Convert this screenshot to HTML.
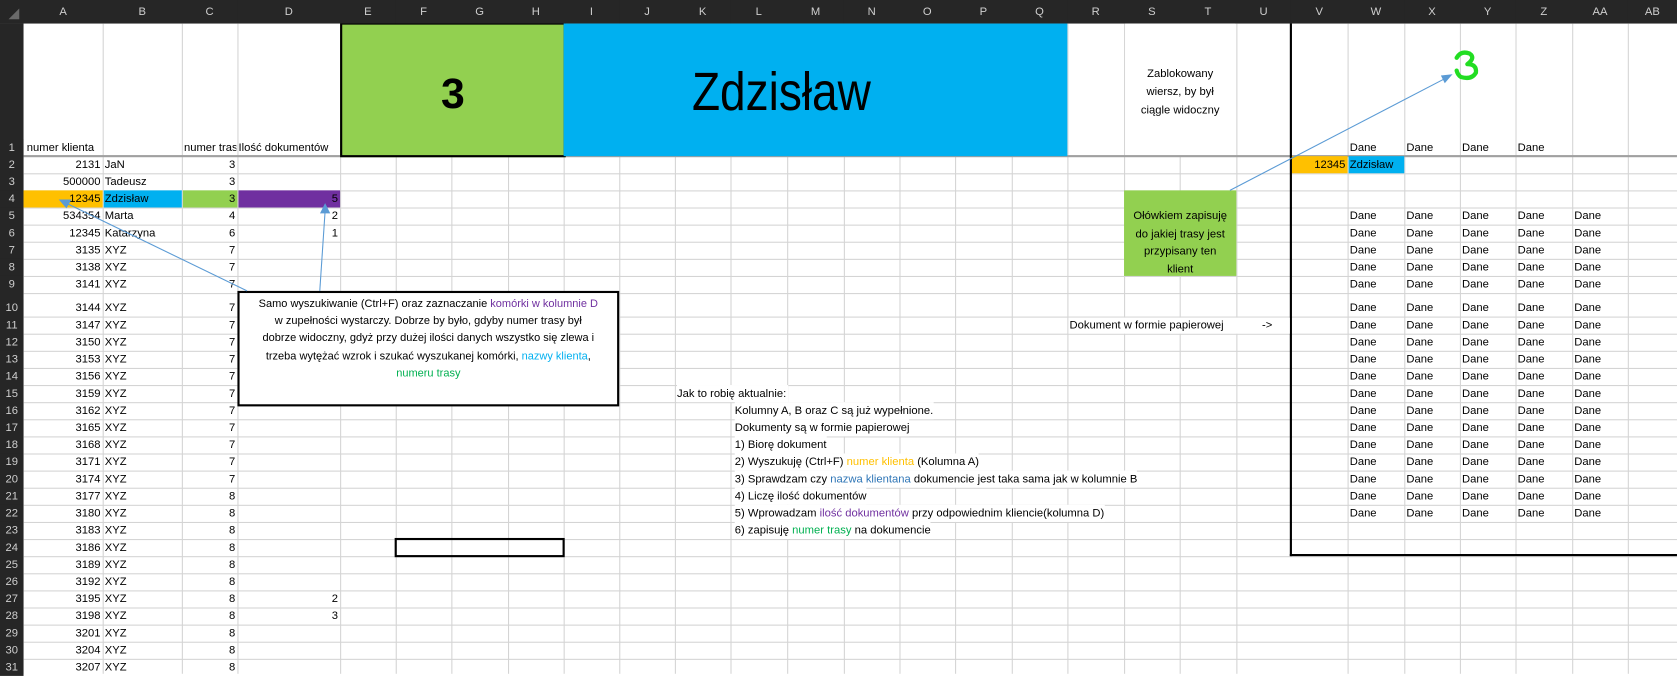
<!DOCTYPE html>
<html><head><meta charset="utf-8"><style>
html,body{margin:0;padding:0;background:#fff;overflow:hidden;width:1677px;height:673px}
#w{position:absolute;left:0;top:0;width:1568px;height:630px;transform:scale(1.0695);transform-origin:0 0;font-family:"Liberation Sans",Arial,sans-serif;font-size:10.5px;color:#000}
.a{position:absolute}
.hd{position:absolute;top:0;height:22px;background:#262626;color:#cfcfcf;font-size:10.5px;line-height:22px;text-align:center}
.rh{position:absolute;left:0;width:22px;background:#262626;color:#cfcfcf;font-size:10.5px;text-align:center}
.v{position:absolute;top:22px;width:1px;height:608px;background:#d4d4d4}
.h{position:absolute;left:22px;width:1546px;height:1px;background:#d4d4d4}
.c{position:absolute;height:16px;line-height:17px;white-space:nowrap}
.r{text-align:right}
</style></head><body><div id="w">
<div class="hd" style="left:0;width:1568px"></div>
<div class="a" style="left:8px;top:8px;width:0;height:0;border-left:10px solid transparent;border-bottom:10px solid #6a6a6a"></div>
<div class="hd" style="left:22px;width:74px">A</div><div class="hd" style="left:96px;width:74px">B</div><div class="hd" style="left:170px;width:52px">C</div><div class="hd" style="left:222px;width:96px">D</div>
<div class="hd" style="left:318px;width:52px">E</div><div class="hd" style="left:370px;width:52px">F</div><div class="hd" style="left:422px;width:53px">G</div><div class="hd" style="left:475px;width:52px">H</div><div class="hd" style="left:527px;width:52px">I</div><div class="hd" style="left:579px;width:52px">J</div><div class="hd" style="left:631px;width:52px">K</div><div class="hd" style="left:683px;width:53px">L</div><div class="hd" style="left:736px;width:53px">M</div><div class="hd" style="left:789px;width:52px">N</div><div class="hd" style="left:841px;width:52px">O</div><div class="hd" style="left:893px;width:53px">P</div><div class="hd" style="left:946px;width:52px">Q</div><div class="hd" style="left:998px;width:53px">R</div><div class="hd" style="left:1051px;width:52px">S</div><div class="hd" style="left:1103px;width:53px">T</div><div class="hd" style="left:1156px;width:51px">U</div><div class="hd" style="left:1207px;width:53px">V</div><div class="hd" style="left:1260px;width:53px">W</div><div class="hd" style="left:1313px;width:52px">X</div><div class="hd" style="left:1365px;width:52px">Y</div><div class="hd" style="left:1417px;width:53px">Z</div><div class="hd" style="left:1470px;width:52px">AA</div><div class="hd" style="left:1522px;width:46px">AB</div>
<div class="rh" style="top:22px;height:608px"></div>
<div class="rh" style="top:130px;height:16px;line-height:16px">1</div>
<div class="rh" style="top:146px;line-height:16px">2</div><div class="rh" style="top:162px;line-height:16px">3</div><div class="rh" style="top:178px;line-height:16px">4</div><div class="rh" style="top:194px;line-height:16px">5</div><div class="rh" style="top:210px;line-height:16px">6</div><div class="rh" style="top:226px;line-height:16px">7</div><div class="rh" style="top:242px;line-height:16px">8</div><div class="rh" style="top:258px;line-height:16px">9</div><div class="rh" style="top:280px;line-height:16px">10</div>
<div class="rh" style="top:296px;line-height:16px">11</div><div class="rh" style="top:312px;line-height:16px">12</div><div class="rh" style="top:328px;line-height:16px">13</div><div class="rh" style="top:344px;line-height:16px">14</div><div class="rh" style="top:360px;line-height:16px">15</div><div class="rh" style="top:376px;line-height:16px">16</div><div class="rh" style="top:392px;line-height:16px">17</div><div class="rh" style="top:408px;line-height:16px">18</div><div class="rh" style="top:424px;line-height:16px">19</div><div class="rh" style="top:440px;line-height:16px">20</div><div class="rh" style="top:456px;line-height:16px">21</div><div class="rh" style="top:472px;line-height:16px">22</div><div class="rh" style="top:488px;line-height:16px">23</div><div class="rh" style="top:504px;line-height:16px">24</div><div class="rh" style="top:520px;line-height:16px">25</div><div class="rh" style="top:536px;line-height:16px">26</div><div class="rh" style="top:552px;line-height:16px">27</div><div class="rh" style="top:568px;line-height:16px">28</div><div class="rh" style="top:584px;line-height:16px">29</div><div class="rh" style="top:600px;line-height:16px">30</div><div class="rh" style="top:616px;line-height:16px">31</div>
<div class="v" style="left:96px"></div><div class="v" style="left:170px"></div><div class="v" style="left:222px"></div><div class="v" style="left:318px"></div><div class="v" style="left:370px"></div><div class="v" style="left:422px"></div><div class="v" style="left:475px"></div><div class="v" style="left:527px"></div><div class="v" style="left:579px"></div><div class="v" style="left:631px"></div><div class="v" style="left:683px"></div><div class="v" style="left:736px"></div><div class="v" style="left:789px"></div><div class="v" style="left:841px"></div><div class="v" style="left:893px"></div><div class="v" style="left:946px"></div><div class="v" style="left:998px"></div><div class="v" style="left:1051px"></div><div class="v" style="left:1103px"></div><div class="v" style="left:1156px"></div><div class="v" style="left:1260px"></div><div class="v" style="left:1313px"></div><div class="v" style="left:1365px"></div><div class="v" style="left:1417px"></div><div class="v" style="left:1470px"></div><div class="v" style="left:1522px"></div>
<div class="h" style="top:162px"></div><div class="h" style="top:178px"></div><div class="h" style="top:194px"></div><div class="h" style="top:210px"></div><div class="h" style="top:226px"></div><div class="h" style="top:242px"></div><div class="h" style="top:258px"></div><div class="h" style="top:274px"></div><div class="h" style="top:296px"></div><div class="h" style="top:312px"></div><div class="h" style="top:328px"></div><div class="h" style="top:344px"></div><div class="h" style="top:360px"></div><div class="h" style="top:376px"></div><div class="h" style="top:392px"></div><div class="h" style="top:408px"></div><div class="h" style="top:424px"></div><div class="h" style="top:440px"></div><div class="h" style="top:456px"></div><div class="h" style="top:472px"></div><div class="h" style="top:488px"></div><div class="h" style="top:504px"></div><div class="h" style="top:520px"></div><div class="h" style="top:536px"></div><div class="h" style="top:552px"></div><div class="h" style="top:568px"></div><div class="h" style="top:584px"></div><div class="h" style="top:600px"></div><div class="h" style="top:616px"></div>
<div class="a" style="left:1052px;top:22px;width:103px;height:124px;background:#fff"></div>
<div class="a" style="left:1052px;top:61px;width:103px;text-align:center;line-height:17px;font-size:10.5px">Zablokowany<br>wiersz, by był<br>ciągle widoczny</div>
<div class="a" style="left:22px;top:145px;width:1546px;height:2px;background:#a0a0a0"></div>
<div class="a" style="left:318px;top:22px;width:207px;height:122px;background:#92d050;border:1px solid #000;border-width:1px 2px 2px 2px;text-align:center;line-height:130px;font-size:40px;font-weight:bold">3</div>
<div class="a" style="left:527px;top:22px;width:471px;height:124px;background:#00b0f0;overflow:hidden"><div class="a" style="left:120px;top:0;line-height:128px;font-size:50px;transform:scaleX(0.86);transform-origin:0 0;white-space:nowrap">Zdzisław</div></div>
<div class="c" style="left:25px;top:130px">numer klienta</div>
<div class="c" style="left:172px;top:130px;width:49px;overflow:hidden">numer trasy</div>
<div class="c" style="left:223px;top:130px;width:95px;overflow:hidden">Ilość dokumentów</div>
<div class="c" style="left:1262px;top:130px">Dane</div><div class="c" style="left:1315px;top:130px">Dane</div><div class="c" style="left:1367px;top:130px">Dane</div><div class="c" style="left:1419px;top:130px">Dane</div>
<div class="a" style="left:22px;top:178px;width:74px;height:16px;background:#ffc000"></div>
<div class="a" style="left:97px;top:178px;width:73px;height:16px;background:#00b0f0"></div>
<div class="a" style="left:171px;top:178px;width:51px;height:16px;background:#92d050"></div>
<div class="a" style="left:223px;top:178px;width:95px;height:16px;background:#7030a0"></div>
<div class="a" style="left:1207px;top:146px;width:53px;height:16px;background:#ffc000"></div>
<div class="a" style="left:1261px;top:146px;width:52px;height:16px;background:#00b0f0"></div>
<div class="c r" style="left:22px;width:72px;top:146px">2131</div><div class="c" style="left:98px;top:146px">JaN</div><div class="c r" style="left:170px;width:50px;top:146px">3</div>
<div class="c r" style="left:22px;width:72px;top:162px">500000</div><div class="c" style="left:98px;top:162px">Tadeusz</div><div class="c r" style="left:170px;width:50px;top:162px">3</div>
<div class="c r" style="left:22px;width:72px;top:178px">12345</div><div class="c" style="left:98px;top:178px">Zdzisław</div><div class="c r" style="left:170px;width:50px;top:178px">3</div><div class="c r" style="left:222px;width:94px;top:178px">5</div>
<div class="c r" style="left:22px;width:72px;top:194px">534354</div><div class="c" style="left:98px;top:194px">Marta</div><div class="c r" style="left:170px;width:50px;top:194px">4</div><div class="c r" style="left:222px;width:94px;top:194px">2</div>
<div class="c r" style="left:22px;width:72px;top:210px">12345</div><div class="c" style="left:98px;top:210px">Katarzyna</div><div class="c r" style="left:170px;width:50px;top:210px">6</div><div class="c r" style="left:222px;width:94px;top:210px">1</div>
<div class="c r" style="left:22px;width:72px;top:226px">3135</div><div class="c" style="left:98px;top:226px">XYZ</div><div class="c r" style="left:170px;width:50px;top:226px">7</div>
<div class="c r" style="left:22px;width:72px;top:242px">3138</div><div class="c" style="left:98px;top:242px">XYZ</div><div class="c r" style="left:170px;width:50px;top:242px">7</div>
<div class="c r" style="left:22px;width:72px;top:258px">3141</div><div class="c" style="left:98px;top:258px">XYZ</div><div class="c r" style="left:170px;width:50px;top:258px">7</div>
<div class="c r" style="left:22px;width:72px;top:280px">3144</div><div class="c" style="left:98px;top:280px">XYZ</div><div class="c r" style="left:170px;width:50px;top:280px">7</div>
<div class="c r" style="left:22px;width:72px;top:296px">3147</div><div class="c" style="left:98px;top:296px">XYZ</div><div class="c r" style="left:170px;width:50px;top:296px">7</div>
<div class="c r" style="left:22px;width:72px;top:312px">3150</div><div class="c" style="left:98px;top:312px">XYZ</div><div class="c r" style="left:170px;width:50px;top:312px">7</div>
<div class="c r" style="left:22px;width:72px;top:328px">3153</div><div class="c" style="left:98px;top:328px">XYZ</div><div class="c r" style="left:170px;width:50px;top:328px">7</div>
<div class="c r" style="left:22px;width:72px;top:344px">3156</div><div class="c" style="left:98px;top:344px">XYZ</div><div class="c r" style="left:170px;width:50px;top:344px">7</div>
<div class="c r" style="left:22px;width:72px;top:360px">3159</div><div class="c" style="left:98px;top:360px">XYZ</div><div class="c r" style="left:170px;width:50px;top:360px">7</div>
<div class="c r" style="left:22px;width:72px;top:376px">3162</div><div class="c" style="left:98px;top:376px">XYZ</div><div class="c r" style="left:170px;width:50px;top:376px">7</div>
<div class="c r" style="left:22px;width:72px;top:392px">3165</div><div class="c" style="left:98px;top:392px">XYZ</div><div class="c r" style="left:170px;width:50px;top:392px">7</div>
<div class="c r" style="left:22px;width:72px;top:408px">3168</div><div class="c" style="left:98px;top:408px">XYZ</div><div class="c r" style="left:170px;width:50px;top:408px">7</div>
<div class="c r" style="left:22px;width:72px;top:424px">3171</div><div class="c" style="left:98px;top:424px">XYZ</div><div class="c r" style="left:170px;width:50px;top:424px">7</div>
<div class="c r" style="left:22px;width:72px;top:440px">3174</div><div class="c" style="left:98px;top:440px">XYZ</div><div class="c r" style="left:170px;width:50px;top:440px">7</div>
<div class="c r" style="left:22px;width:72px;top:456px">3177</div><div class="c" style="left:98px;top:456px">XYZ</div><div class="c r" style="left:170px;width:50px;top:456px">8</div>
<div class="c r" style="left:22px;width:72px;top:472px">3180</div><div class="c" style="left:98px;top:472px">XYZ</div><div class="c r" style="left:170px;width:50px;top:472px">8</div>
<div class="c r" style="left:22px;width:72px;top:488px">3183</div><div class="c" style="left:98px;top:488px">XYZ</div><div class="c r" style="left:170px;width:50px;top:488px">8</div>
<div class="c r" style="left:22px;width:72px;top:504px">3186</div><div class="c" style="left:98px;top:504px">XYZ</div><div class="c r" style="left:170px;width:50px;top:504px">8</div>
<div class="c r" style="left:22px;width:72px;top:520px">3189</div><div class="c" style="left:98px;top:520px">XYZ</div><div class="c r" style="left:170px;width:50px;top:520px">8</div>
<div class="c r" style="left:22px;width:72px;top:536px">3192</div><div class="c" style="left:98px;top:536px">XYZ</div><div class="c r" style="left:170px;width:50px;top:536px">8</div>
<div class="c r" style="left:22px;width:72px;top:552px">3195</div><div class="c" style="left:98px;top:552px">XYZ</div><div class="c r" style="left:170px;width:50px;top:552px">8</div><div class="c r" style="left:222px;width:94px;top:552px">2</div>
<div class="c r" style="left:22px;width:72px;top:568px">3198</div><div class="c" style="left:98px;top:568px">XYZ</div><div class="c r" style="left:170px;width:50px;top:568px">8</div><div class="c r" style="left:222px;width:94px;top:568px">3</div>
<div class="c r" style="left:22px;width:72px;top:584px">3201</div><div class="c" style="left:98px;top:584px">XYZ</div><div class="c r" style="left:170px;width:50px;top:584px">8</div>
<div class="c r" style="left:22px;width:72px;top:600px">3204</div><div class="c" style="left:98px;top:600px">XYZ</div><div class="c r" style="left:170px;width:50px;top:600px">8</div>
<div class="c r" style="left:22px;width:72px;top:616px">3207</div><div class="c" style="left:98px;top:616px">XYZ</div><div class="c r" style="left:170px;width:50px;top:616px">8</div>
<div class="c r" style="left:1207px;width:51px;top:146px">12345</div><div class="c" style="left:1262px;top:146px">Zdzisław</div>
<div class="a" style="left:1262px;top:194px;line-height:16px;white-space:pre">Dane
Dane
Dane
Dane
Dane
<span style="display:block;height:22px;line-height:28px">Dane</span>Dane
Dane
Dane
Dane
Dane
Dane
Dane
Dane
Dane
Dane
Dane
Dane</div>
<div class="a" style="left:1315px;top:194px;line-height:16px;white-space:pre">Dane
Dane
Dane
Dane
Dane
<span style="display:block;height:22px;line-height:28px">Dane</span>Dane
Dane
Dane
Dane
Dane
Dane
Dane
Dane
Dane
Dane
Dane
Dane</div>
<div class="a" style="left:1367px;top:194px;line-height:16px;white-space:pre">Dane
Dane
Dane
Dane
Dane
<span style="display:block;height:22px;line-height:28px">Dane</span>Dane
Dane
Dane
Dane
Dane
Dane
Dane
Dane
Dane
Dane
Dane
Dane</div>
<div class="a" style="left:1419px;top:194px;line-height:16px;white-space:pre">Dane
Dane
Dane
Dane
Dane
<span style="display:block;height:22px;line-height:28px">Dane</span>Dane
Dane
Dane
Dane
Dane
Dane
Dane
Dane
Dane
Dane
Dane
Dane</div>
<div class="a" style="left:1472px;top:194px;line-height:16px;white-space:pre">Dane
Dane
Dane
Dane
Dane
<span style="display:block;height:22px;line-height:28px">Dane</span>Dane
Dane
Dane
Dane
Dane
Dane
Dane
Dane
Dane
Dane
Dane
Dane</div>
<div class="a" style="left:1206px;top:22px;width:2px;height:498px;background:#000"></div>
<div class="a" style="left:1206px;top:518px;width:362px;height:2px;background:#000"></div>
<div class="a" style="left:1051px;top:178px;width:105px;height:80px;background:#92d050;text-align:center;line-height:16.5px;font-size:10.5px;box-sizing:border-box;padding-top:16px">Ołówkiem zapisuję<br>do jakiej trasy jest<br>przypisany ten<br>klient</div>
<div class="a" style="left:999px;top:297px;width:207px;height:15px;background:#fff"></div>
<div class="c" style="left:1000px;top:296px">Dokument w formie papierowej</div>
<div class="c" style="left:1180px;top:296px">-&gt;</div>
<div class="c" style="left:633px;top:360px;background:#fff;padding-right:2px">Jak to robię aktualnie:</div>
<div class="c" style="left:687px;top:376px;background:#fff">Kolumny A, B oraz C są już wypełnione.</div>
<div class="c" style="left:687px;top:392px;background:#fff">Dokumenty są w formie papierowej</div>
<div class="c" style="left:687px;top:408px;background:#fff">1) Biorę dokument</div>
<div class="c" style="left:687px;top:424px;background:#fff">2) Wyszukuję (Ctrl+F) <span style="color:#ffc000">numer klienta</span> (Kolumna A)</div>
<div class="c" style="left:687px;top:440px;background:#fff">3) Sprawdzam czy <span style="color:#2e75b6">nazwa klientana</span> dokumencie jest taka sama jak w kolumnie B</div>
<div class="c" style="left:687px;top:456px;background:#fff">4) Liczę ilość dokumentów</div>
<div class="c" style="left:687px;top:472px;background:#fff">5) Wprowadzam <span style="color:#7030a0">ilość dokumentów</span> przy odpowiednim kliencie(kolumna D)</div>
<div class="c" style="left:687px;top:488px;background:#fff">6) zapisuję <span style="color:#00b050">numer trasy</span> na dokumencie</div>
<div class="a" style="left:369px;top:503px;width:155px;height:14px;border:2px solid #000"></div>
<div class="a" style="left:222px;top:272px;width:353px;height:101px;background:#fff;border:2px solid #000;text-align:center;line-height:16.2px;font-size:10.3px;padding-top:3px">Samo wyszukiwanie (Ctrl+F) oraz zaznaczanie <span style="color:#7030a0">komórki w kolumnie D</span><br>w zupełności wystarczy. Dobrze by było, gdyby numer trasy był<br>dobrze widoczny, gdyż przy dużej ilości danych wszystko się zlewa i<br>trzeba wytężać wzrok i szukać wyszukanej komórki, <span style="color:#00b0f0">nazwy klienta</span>,<br><span style="color:#00b050">numeru trasy</span></div>
<svg class="a" style="left:0;top:0" width="1568" height="630" viewBox="0 0 1568 630">
<g stroke="#5b9bd5" stroke-width="1" fill="#5b9bd5">
<line x1="231" y1="272" x2="60" y2="189"/><polygon points="56,187 66,187 62,194"/>
<line x1="299" y1="272" x2="304" y2="197"/><polygon points="304,191 300,199 308,199"/>
<line x1="1150" y1="178" x2="1352" y2="73"/><polygon points="1357,70 1348,71 1351,77"/>
</g>
<path d="M1362,54 Q1366,47 1374,50 Q1380,54 1372,60 Q1381,60 1380,68 Q1376,75 1366,72 Q1363,70 1362,66" fill="none" stroke="#22dd22" stroke-width="4" stroke-linecap="round" stroke-linejoin="round"/>
</svg>
</div></body></html>
